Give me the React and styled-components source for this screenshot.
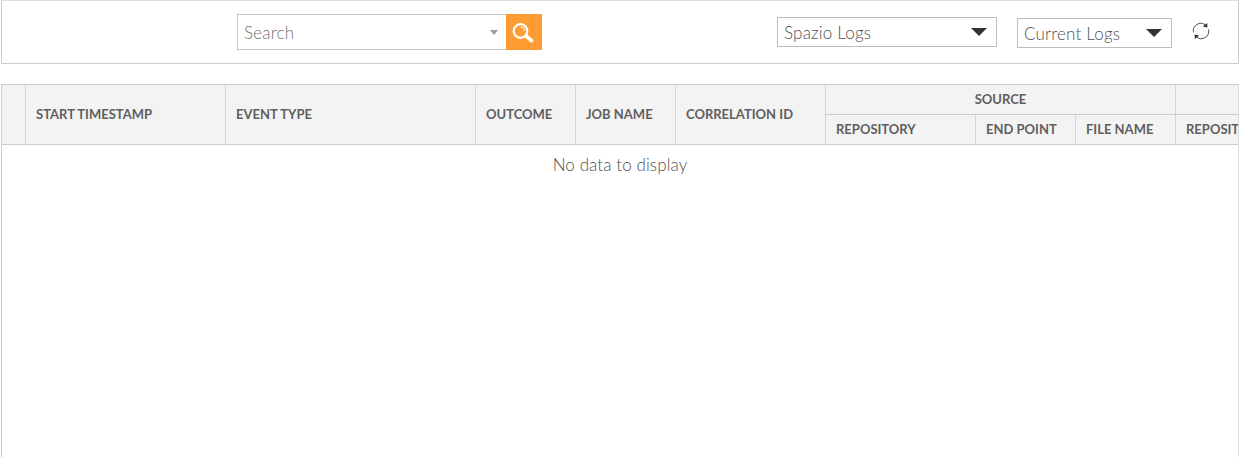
import React from "react";
import styled, { createGlobalStyle } from "styled-components";

const GlobalStyle = createGlobalStyle`
  html, body {
    margin: 0;
    padding: 0;
    background: #fff;
    overflow: hidden;
  }
  body {
    font-family: "Lato", "Open Sans", sans-serif;
    color: #666;
  }
`;

const Page = styled.div`
  width: 1238px;
  height: 457px;
  margin-left: 1px;
  display: flex;
  flex-direction: column;
  overflow: hidden;
`;

const TopBar = styled.div`
  flex: none;
  height: 64px;
  box-sizing: border-box;
  border: 1px solid #ccc;
  border-top-color: #ddd;
  display: flex;
  align-items: flex-start;
  margin-bottom: 20px;
`;

const SearchBox = styled.div`
  display: flex;
  width: 305px;
  height: 36px;
  margin: 13px 0 0 235px;
`;

const SearchField = styled.div`
  flex: 1;
  box-sizing: border-box;
  border: 1px solid #c6c6c6;
  border-right: none;
  display: flex;
  align-items: center;
  justify-content: space-between;
  padding: 0 7px 0 6px;
  font-size: 17px;
  font-weight: 300;
  letter-spacing: 0.2px;
  color: #6f6f6f;
`;

const SmallCaret = styled.span`
  width: 0;
  height: 0;
  border-left: 4.5px solid transparent;
  border-right: 4.5px solid transparent;
  border-top: 5px solid #999;
  margin-right: 1px;
`;

const SearchButton = styled.div`
  width: 36px;
  height: 36px;
  background: #ff9b33;
  display: flex;
  align-items: center;
  justify-content: center;
`;

const Select = styled.div`
  box-sizing: border-box;
  width: ${(props) => props.$width}px;
  height: ${(props) => props.$height}px;
  margin: ${(props) => props.$top}px 0 0 ${(props) => props.$left}px;
  border: 1px solid #bdbdbd;
  display: flex;
  align-items: center;
  justify-content: space-between;
  padding: 0 9px 0 6px;
  font-size: 17px;
  font-weight: 300;
  letter-spacing: 0.2px;
  color: #505050;
`;

const BigCaret = styled.span`
  width: 0;
  height: 0;
  border-left: 8px solid transparent;
  border-right: 8px solid transparent;
  border-top: 8px solid #333;
`;

const RefreshIcon = styled.svg`
  width: 20px;
  height: 20px;
  margin: 20px 0 0 19px;
  fill: none;
  stroke: #555;
  stroke-width: 1;
`;

const Table = styled.div`
  flex: 1;
  box-sizing: border-box;
  border: 1px solid #ccc;
  border-bottom: none;
  border-right-color: #ddd;
  overflow: hidden;
`;

const HeaderGrid = styled.div`
  display: grid;
  grid-template-columns: 24px 200px 250px 100px 100px 150px 150px 100px 100px 150px;
  grid-template-rows: 30px 30px;
  background: #f3f3f3;
`;

const HeadCell = styled.div`
  box-sizing: border-box;
  grid-column: ${(props) => props.$column || "auto"};
  grid-row: ${(props) => props.$row || "auto"};
  border-right: 1px solid #d4d4d4;
  border-bottom: 1px solid #ccc;
  display: flex;
  align-items: center;
  justify-content: ${(props) => (props.$center ? "center" : "flex-start")};
  padding: ${(props) => (props.$center ? "0 0 1px" : "0 10px 2px")};
  font-size: 13px;
  font-weight: 700;
  color: #5f5f5f;
  white-space: nowrap;
  overflow: hidden;
`;

const EmptyText = styled.div`
  text-align: center;
  padding: 10px 0 0 0;
  font-size: 17px;
  font-weight: 300;
  line-height: 20px;
  letter-spacing: 0.1px;
  color: #505050;
`;

export default function App() {
  return (
    <>
      <GlobalStyle />
      <Page>
        <TopBar>
          <SearchBox>
            <SearchField>
              Search
              <SmallCaret />
            </SearchField>
            <SearchButton>
              <svg width="24" height="24" viewBox="0 0 24 24" fill="none" stroke="#fff">
                <circle cx="8.5" cy="11" r="6.8" strokeWidth="2.2" />
                <path d="M14 16l5.5 4.5" strokeWidth="3.6" strokeLinecap="round" />
                <path d="M8.5 7a4 4 0 0 1 4 4" strokeWidth="1" />
              </svg>
            </SearchButton>
          </SearchBox>
          <Select $width={220} $height={30} $top={16} $left={235}>
            Spazio Logs
            <BigCaret />
          </Select>
          <Select $width={155} $height={30} $top={17} $left={20}>
            Current Logs
            <BigCaret />
          </Select>
          <RefreshIcon viewBox="0 0 20 20">
            <path d="M2.5 11.5A7.5 7.5 0 0 1 14.5 4" />
            <path d="M16.2 2l.2 4.6-4.6-1z" fill="#333" stroke="none" />
            <path d="M17.5 8.5A7.5 7.5 0 0 1 5.5 16" />
            <path d="M3.8 18l-.2-4.6 4.6 1z" fill="#333" stroke="none" />
          </RefreshIcon>
        </TopBar>
        <Table>
          <HeaderGrid>
            <HeadCell $column="1" $row="1 / 3" />
            <HeadCell $column="2" $row="1 / 3">START TIMESTAMP</HeadCell>
            <HeadCell $column="3" $row="1 / 3">EVENT TYPE</HeadCell>
            <HeadCell $column="4" $row="1 / 3">OUTCOME</HeadCell>
            <HeadCell $column="5" $row="1 / 3">JOB NAME</HeadCell>
            <HeadCell $column="6" $row="1 / 3">CORRELATION ID</HeadCell>
            <HeadCell $column="7 / 10" $row="1" $center>SOURCE</HeadCell>
            <HeadCell $column="10" $row="1" />
            <HeadCell $column="7" $row="2">REPOSITORY</HeadCell>
            <HeadCell $column="8" $row="2">END POINT</HeadCell>
            <HeadCell $column="9" $row="2">FILE NAME</HeadCell>
            <HeadCell $column="10" $row="2">REPOSITORY</HeadCell>
          </HeaderGrid>
          <EmptyText>No data to display</EmptyText>
        </Table>
      </Page>
    </>
  );
}
